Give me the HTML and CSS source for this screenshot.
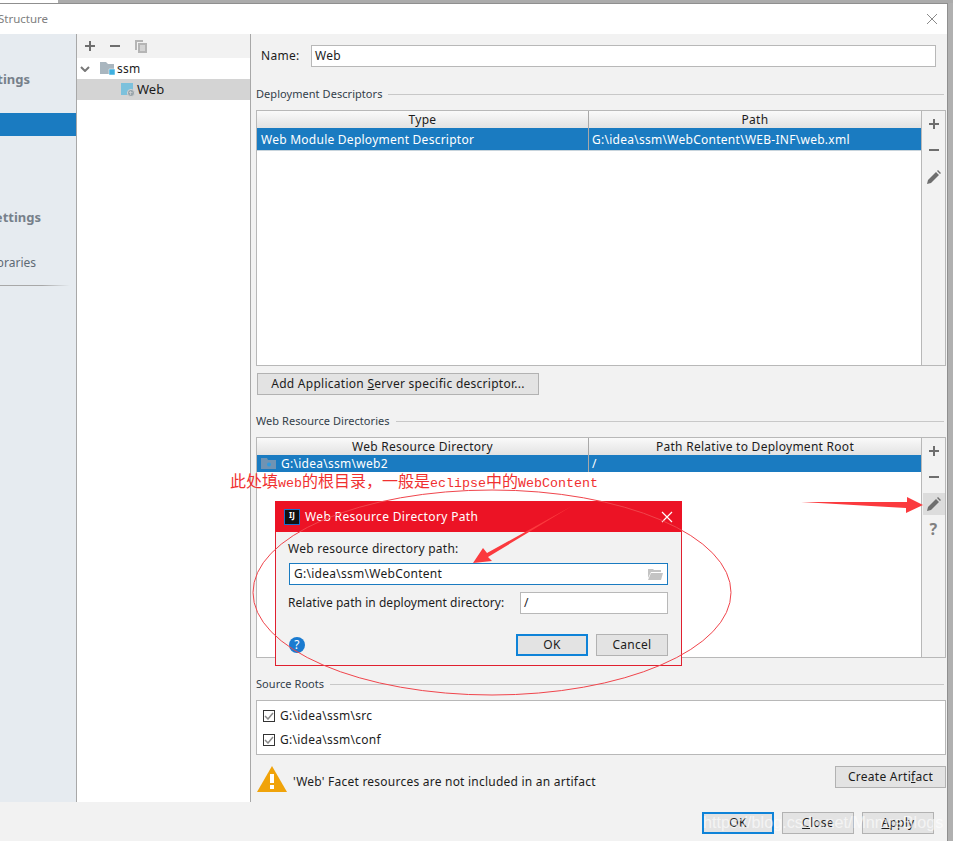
FILE: index.html
```html
<!DOCTYPE html>
<html lang="en">
<head>
<meta charset="utf-8">
<title>Project Structure</title>
<link rel="stylesheet" href="styles.css">
</head>
<body>
<div class="screen">
  <div class="topstrip"><div class="topstrip-left"></div></div>
  <div class="window">
    <div class="titlebar">
      <span class="title-text">Structure</span>
      <svg class="win-close" width="12" height="12" viewBox="0 0 12 12"><path d="M1 1l10 10M11 1L1 11" stroke="#8a8a8a" stroke-width="1" fill="none"/></svg>
    </div>
    <div class="body">
      <aside class="sidebar">
        <div class="side-row side-head side-project">Project Settings</div>
        <div class="side-row side-selected">Modules</div>
        <div class="side-row side-head side-platform">Platform Settings</div>
        <div class="side-row side-libs">Global Libraries</div>
        <div class="side-divider"></div>
      </aside>
      <section class="tree">
        <div class="tree-tools">
          <svg width="12" height="12" viewBox="0 0 12 12"><path d="M1 6h10M6 1v10" stroke="#6e6e6e" stroke-width="2"/></svg>
          <svg width="12" height="12" viewBox="0 0 12 12"><path d="M1 6h10" stroke="#6e6e6e" stroke-width="2"/></svg>
          <svg width="13" height="13" viewBox="0 0 13 13"><path d="M1 0h8v2H3v8H1z" fill="#b5b5b5"/><path d="M4 3h9v10H4z" fill="#b5b5b5"/><path d="M6 6h5M6 8h5M6 10h5" stroke="#f2f2f2"/></svg>
        </div>
        <div class="tree-row">
          <svg class="chev" width="10" height="6" viewBox="0 0 10 6"><path d="M1 1l4 4 4-4" stroke="#777" stroke-width="2" fill="none"/></svg>
          <svg class="tree-icon-folder" width="15" height="14" viewBox="0 0 15 14"><path d="M0 0h6l2 2h6v10H0z" fill="#a9b6bf"/><path d="M9 7h6v6H9z" fill="#3fb0e0" stroke="#fff" stroke-width=".5"/></svg>
          <span>ssm</span>
        </div>
        <div class="tree-row tree-row-selected">
          <svg class="tree-icon-web" width="14" height="14" viewBox="0 0 14 14"><path d="M0 0h12v9H9v3H0z" fill="#7cc1dc"/><circle cx="10" cy="10" r="3.6" fill="#9aa5ab" stroke="#d4d4d4"/><path d="M8 9.500h3.500M9.500 8v4" stroke="#d4d4d4" stroke-width=".7"/></svg>
          <span class="tree-web-label">Web</span>
        </div>
      </section>
      <main class="panel">
        <div class="name-row">
          <label class="name-label">Name:</label>
          <div class="field name-field">Web</div>
        </div>
        <div class="group-title group-first"><span>Deployment Descriptors</span><i></i></div>
        <div class="tablewrap tablewrap-desc">
          <div class="table">
            <div class="thead"><div class="col1">Type</div><div class="col2">Path</div></div>
            <div class="trow trow-desc"><div class="col1 cell-left cell-first">Web Module Deployment Descriptor</div><div class="col2 cell-left">G:\idea\ssm\WebContent\WEB-INF\web.xml</div></div>
          </div>
          <div class="side-tools">
            <svg width="12" height="12" viewBox="0 0 12 12"><path d="M1 6h10M6 1v10" stroke="#6e6e6e" stroke-width="2"/></svg>
            <svg width="12" height="12" viewBox="0 0 12 12"><path d="M1 6h10" stroke="#6e6e6e" stroke-width="2"/></svg>
            <svg width="14" height="14" viewBox="0 0 14 14"><path d="M0 14l1-4 8-8 3 3-8 8zM10 1l1-1 3 3-1 1z" fill="#6e6e6e"/></svg>
          </div>
        </div>
        <button class="btn btn-add">Add Application <u>S</u>erver specific descriptor...</button>
        <div class="group-title"><span>Web Resource Directories</span><i></i></div>
        <div class="tablewrap tablewrap-res">
          <div class="table">
            <div class="thead"><div class="col1">Web Resource Directory</div><div class="col2">Path Relative to Deployment Root</div></div>
            <div class="trow trow-res">
              <div class="col1 cell-left cell-icon">
                <svg width="15" height="11" viewBox="0 0 15 11"><path d="M0 0h6l1 2h8v9H0z" fill="#6f93b3"/><circle cx="8" cy="6.500" r="2" fill="#2f9be0"/></svg>
                G:\idea\ssm\web2
              </div>
              <div class="col2 cell-left">/</div>
            </div>
          </div>
          <div class="side-tools side-tools-res">
            <svg width="12" height="12" viewBox="0 0 12 12"><path d="M1 6h10M6 1v10" stroke="#6e6e6e" stroke-width="2"/></svg>
            <svg width="12" height="12" viewBox="0 0 12 12"><path d="M1 6h10" stroke="#6e6e6e" stroke-width="2"/></svg>
            <div class="tool-active"><svg width="14" height="14" viewBox="0 0 14 14"><path d="M0 14l1-4 8-8 3 3-8 8zM10 1l1-1 3 3-1 1z" fill="#6e6e6e"/></svg></div>
            <span class="tool-help">?</span>
          </div>
        </div>
        <div class="group-title"><span>Source Roots</span><i></i></div>
        <div class="roots">
          <div class="root-row"><span class="check"><svg width="10" height="8" viewBox="0 0 10 8"><path d="M1 4l3 3 5-6" stroke="#8a8a8a" stroke-width="1.500" fill="none"/></svg></span>G:\idea\ssm\src</div>
          <div class="root-row"><span class="check"><svg width="10" height="8" viewBox="0 0 10 8"><path d="M1 4l3 3 5-6" stroke="#8a8a8a" stroke-width="1.500" fill="none"/></svg></span>G:\idea\ssm\conf</div>
        </div>
        <div class="warn-row">
          <svg width="30" height="26" viewBox="0 0 30 26"><path d="M15 0l15 26H0z" fill="#f0a30a"/><path d="M13 8h4v9h-4zM13 19h4v4h-4z" fill="#fff"/></svg>
          <span class="warn-text">'Web' Facet resources are not included in an artifact</span>
          <button class="btn btn-artifact">Create Arti<u>f</u>act</button>
        </div>
      </main>
    </div>
    <footer class="footer">
      <button class="btn btn-foot btn-primary">OK</button>
      <button class="btn btn-foot"><u>C</u>lose</button>
      <button class="btn btn-foot"><u>A</u>pply</button>
    </footer>
  </div>

  <div class="dialog">
    <div class="dlg-title">
      <span class="ij-logo">IJ</span>
      <span class="dlg-title-text">Web Resource Directory Path</span>
      <svg width="12" height="12" viewBox="0 0 12 12"><path d="M1 1l10 10M11 1L1 11" stroke="#fff" stroke-width="1.200" fill="none"/></svg>
    </div>
    <div class="dlg-body">
      <div class="dlg-label">Web resource directory path:</div>
      <div class="field dlg-path">G:\idea\ssm\WebContent
        <svg width="15" height="12" viewBox="0 0 15 12"><path d="M0 1h5l1 1h7v2H3L0 10z" fill="#c4c4c4"/><path d="M3 5h12l-2 7H0z" fill="#c4c4c4"/></svg>
      </div>
      <div class="dlg-rel">
        <span class="dlg-rel-label">Relative path in deployment directory:</span>
        <div class="field dlg-rel-field">/</div>
      </div>
      <div class="dlg-foot">
        <span class="help-dot">?</span>
        <button class="btn btn-foot btn-primary">OK</button>
        <button class="btn btn-foot">Cancel</button>
      </div>
    </div>
  </div>

  <svg class="marks" width="953" height="841" viewBox="0 0 953 841">
    <ellipse cx="492" cy="592.500" rx="239" ry="102.500" fill="none" stroke="#f0454c" stroke-width="1"/>
    <path d="M801 502L907 502 907 497 923 505 906 513 906 508z" fill="#fb3a3e"/>
    <path d="M572 506L487 553 483 548 473 563 492 561 488 557z" fill="#fb3a3e"/>
  </svg>
  <div class="note">此处填<span class="note-latin">web</span>的根目录，一般是<span class="note-latin">eclipse</span>中的<span class="note-latin">WebContent</span></div>
  <div class="watermark">https://blog.csdn.net/MnmreBlogs</div>
</div>
</body>
</html>
```
FILE: styles.css
```css
* { box-sizing: border-box; }
html, body { margin: 0; padding: 0; }
body { background: #b0b0b0; font-family: "Noto Sans", "Noto Sans CJK SC", sans-serif; font-size: 12px; letter-spacing: .27px; color: #1c1c1c; }
.screen { position: relative; width: 953px; height: 841px; overflow: hidden; background: #b0b0b0; }

.topstrip { height: 3px; background: #ababab; }
.topstrip-left { width: 58px; height: 3px; background: #fff; }

.window { width: 948px; height: 838px; background: #f2f2f2; border-top: 1px solid #8f8f8f; border-right: 1px solid #8f8f8f; display: flex; flex-direction: column; }
.titlebar { height: 30px; background: #fff; display: flex; align-items: center; justify-content: space-between; padding: 0 9px 0 0; flex: none; }
.title-text { margin-left: -2px; font-size: 11.5px; letter-spacing: 0; color: #808080; padding-bottom: 2px; }

.body { display: flex; height: 768px; flex: none; }

.sidebar { width: 77px; background: #e6ebf0; border-right: 1px solid #a8a8a8; padding-top: 34px; overflow: hidden; flex: none; letter-spacing: 0; }
.side-row { height: 22px; display: flex; align-items: center; justify-content: flex-end; white-space: nowrap; color: #5e6a75; }
.side-head { font-weight: 700; font-size: 13px; color: #76808a; }
.side-project { padding-right: 46px; }
.side-selected { height: 23px; margin-top: 23px; background: #1a7bc1; color: #1a7bc1; padding-right: 80px; }
.side-platform { margin-top: 70px; padding-right: 35px; }
.side-libs { margin-top: 24px; padding-right: 40px; padding-bottom: 2px; }
.side-divider { height: 1px; margin-top: 11px; width: 70px; background: linear-gradient(90deg, #a8a8a8 60%, #e6ebf0); }

.tree { width: 174px; background: #fff; border-right: 1px solid #a8a8a8; flex: none; }
.tree-tools { height: 24px; background: #f2f2f2; display: flex; align-items: center; gap: 13px; padding-left: 7px; }
.tree-row { height: 21px; display: flex; align-items: center; padding-left: 3px; color: #1c1c1c; }
.chev { margin-right: 10px; }
.tree-icon-folder { margin-right: 2px; }
.tree-row-selected { background: #d4d4d4; padding-left: 44px; font-size: 13px; letter-spacing: 0; }
.tree-web-label { padding-bottom: 2px; }
.tree-icon-web { margin-right: 2px; }

.panel { width: 696px; padding: 11px 1px 0 5px; background: #f2f2f2; flex: none; }
.field { background: #fff; border: 1px solid #b8b8b8; height: 22px; display: flex; align-items: center; padding-left: 3px; padding-bottom: 1px; }
.name-row { display: flex; align-items: center; height: 22px; padding: 0 10px 0 5px; }
.name-label { width: 50px; padding-bottom: 1px; }
.name-field { flex: 1; }

.group-title { display: flex; align-items: center; height: 16px; margin-top: 18px; gap: 6px; padding-right: 2px; color: #33404a; font-size: 11px; letter-spacing: .05px; }
.group-title span { padding-bottom: 2px; }
.group-first { margin-top: 19px; }
.group-title i { flex: 1; height: 1px; background: #c8c8c8; }

.tablewrap { display: flex; margin-top: 8px; border: 1px solid #b8b8b8; background: #fff; }
.tablewrap-desc { height: 256px; }
.tablewrap-res { height: 221px; }
.table { width: 665px; border-right: 1px solid #b8b8b8; flex: none; }
.thead { height: 17px; display: flex; background: linear-gradient(#fafafa, #e2e2e2); text-align: center; line-height: 17px; }
.col1 { width: 332px; border-right: 1px solid #a8a8a8; flex: none; }
.col2 { flex: 1; }
.trow { display: flex; background: #1a7bc1; color: #fff; align-items: center; }
.trow-desc { height: 23px; border-bottom: 1px solid #c8d4dc; }
.trow-res { height: 17px; }
.cell-left { padding-left: 3px; height: 100%; display: flex; align-items: center; }
.cell-first { padding-left: 4px; letter-spacing: .25px; }
.cell-icon { gap: 5px; padding-left: 4px; }
.side-tools { flex: 1; background: #f2f2f2; display: flex; flex-direction: column; align-items: center; padding-top: 7px; gap: 14px; }
.side-tools-res { gap: 14px; }
.tool-active { width: 22px; height: 22px; margin: -4px 0; background: #dcdcdc; display: flex; align-items: center; justify-content: center; }
.tool-help { font-size: 16px; font-weight: 700; color: #808080; line-height: 14px; height: 14px; margin-top: -3px; }

.btn { font: inherit; letter-spacing: inherit; color: #1c1c1c; background: #e3e3e3; border: 1px solid #b2b2b2; height: 22px; padding: 0; line-height: 18px; }
.btn-add { display: block; width: 282px; margin: 7px 0 0 1px; }

.roots { height: 55px; margin-top: 8px; background: #fff; border: 1px solid #b8b8b8; padding-top: 3px; }
.root-row { height: 24px; display: flex; align-items: center; padding-left: 6px; gap: 5px; padding-bottom: 1px; }
.check { width: 12px; height: 12px; border: 1px solid #333; background: #fff; display: flex; align-items: center; justify-content: center; }

.warn-row { display: flex; align-items: center; height: 26px; margin-top: 11px; padding-left: 1px; }
.warn-text { margin-left: 6px; margin-top: 4px; letter-spacing: .23px; }
.btn-artifact { width: 111px; margin-left: auto; margin-top: -4px; }

.footer { height: 39px; background: #f2f2f2; display: flex; justify-content: flex-end; align-items: flex-start; gap: 8px; padding: 10px 13px 0 0; flex: none; }
.btn-foot { width: 72px; }
.btn-primary { border: 2px solid #0f83d8; }

.dialog { position: absolute; left: 275px; top: 501px; width: 407px; height: 165px; background: #f2f2f2; border: 1px solid #e0202f; display: flex; flex-direction: column; }
.dlg-title { background: #ec1325; color: #fff; display: flex; align-items: center; padding: 0 9px 0 9px; flex: none; margin: -1px -1px 0; height: 31px; }
.ij-logo { width: 16px; height: 16px; background: #111; border: 1px solid #1a6fd0; color: #fff; font-size: 8px; font-weight: 700; line-height: 10px; text-align: center; flex: none; letter-spacing: 0; }
.dlg-title-text { flex: 1; margin-left: 5px; letter-spacing: .35px; }
.dlg-body { padding: 8px 13px 0 12px; flex: 1; display: flex; flex-direction: column; }
.dlg-label { height: 18px; line-height: 18px; }
.dlg-path { margin-top: 5px; margin-left: 1px; border-color: #1a7bc1; justify-content: space-between; padding-right: 4px; padding-left: 4px; }
.dlg-rel { display: flex; align-items: center; justify-content: space-between; margin-top: 7px; height: 22px; }
.dlg-rel-label { letter-spacing: .05px; padding-bottom: 1px; }
.dlg-rel-field { width: 148px; }
.dlg-foot { display: flex; align-items: center; gap: 8px; margin-top: 20px; padding-left: 1px; }
.help-dot { width: 16px; height: 16px; border-radius: 50%; background: #1a7bd0; color: #fff; font-size: 12px; line-height: 16px; text-align: center; margin-right: auto; }

.marks { position: absolute; left: 0; top: 0; pointer-events: none; }
.note { position: absolute; left: 230px; top: 471px; color: #f03030; font-family: "Noto Sans CJK SC", sans-serif; font-size: 16px; line-height: 18px; letter-spacing: 0; white-space: nowrap; }
.note-latin { font-family: "Liberation Mono", monospace; font-size: 13.33px; }
.watermark { position: absolute; left: 703px; top: 812px; font-family: "Liberation Sans", sans-serif; font-size: 16.2px; letter-spacing: 0; line-height: 20px; color: rgba(255,255,255,.62); white-space: nowrap; }
```
